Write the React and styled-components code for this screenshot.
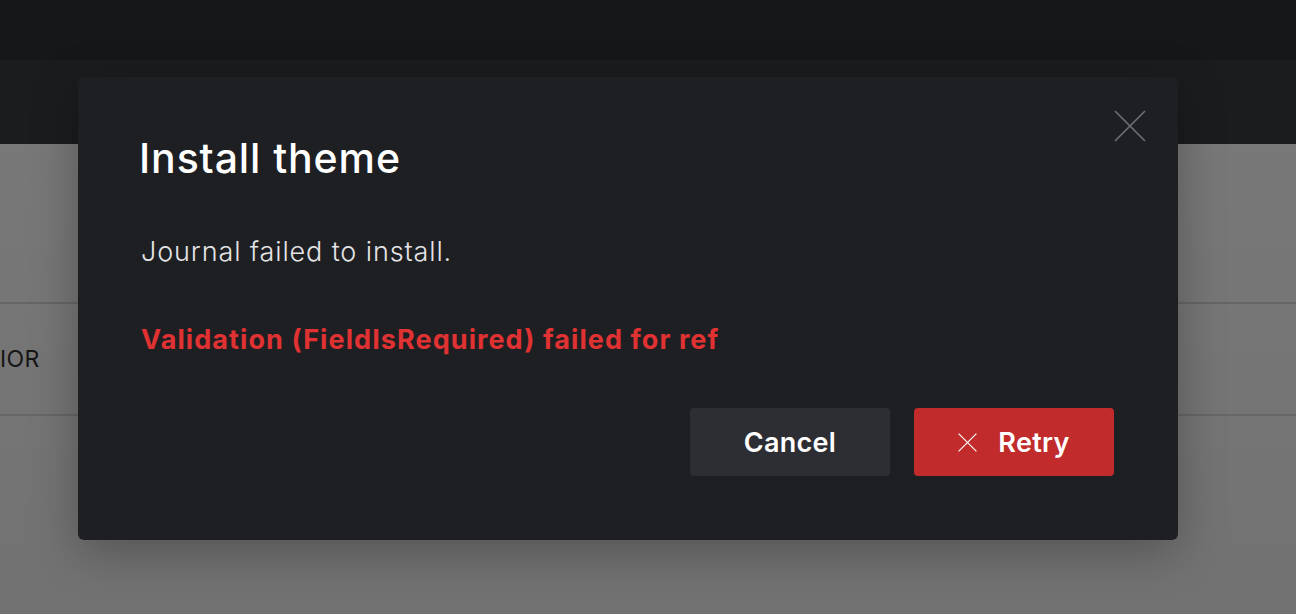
import React from "react";
import styled, { createGlobalStyle } from "styled-components";

const Global = createGlobalStyle`
  html, body { margin: 0; padding: 0; height: 100%; }
  body { font-family: Inter, "Noto Sans", sans-serif; background: #777; overflow: hidden; }
  #root { height: 100%; }
  * { box-sizing: border-box; }
`;

const Page = styled.div`
  position: relative;
  width: 1296px;
  height: 614px;
  display: flex;
  flex-direction: column;
`;

const TopBar = styled.div`
  height: 60px;
  background: #161719;
  flex-shrink: 0;
`;

const SubBar = styled.div`
  height: 84px;
  background: #1b1c1e;
  flex-shrink: 0;
`;

const Content = styled.div`
  flex: 1;
  background: linear-gradient(180deg, #787878 0%, #727272 100%);
  display: flex;
  flex-direction: column;
`;

const Section = styled.div`
  height: ${(p) => p.$h}px;
  border-bottom: ${(p) => (p.$line ? "2px solid #666667" : "none")};
  display: flex;
  align-items: center;
  font-size: 23px;
  color: #161616;
  letter-spacing: 0.4px;
`;

const Backdrop = styled.div`
  position: absolute;
  inset: 0;
`;

const Dialog = styled.div`
  position: absolute;
  left: 78px;
  top: 77px;
  width: 1100px;
  height: 463px;
  background: #1e1f23;
  border-radius: 6px;
  box-shadow: 0 12px 48px rgba(0, 0, 0, 0.28);
  padding: 55px 64px 64px 61px;
  display: flex;
  flex-direction: column;
`;

const CloseButton = styled.button`
  position: absolute;
  top: 33px;
  right: 32px;
  width: 32px;
  height: 32px;
  padding: 0;
  border: none;
  background: none;
  cursor: pointer;
  display: flex;
`;

const Title = styled.h2`
  margin: 0;
  font-size: 41px;
  font-weight: 500;
  line-height: 52px;
  color: #ffffff;
  letter-spacing: 0.9px;
`;

const Message = styled.p`
  margin: 50px 0 0 2px;
  font-size: 27px;
  font-weight: 300;
  line-height: 36px;
  color: #e4e4e6;
  letter-spacing: 0.87px;
`;

const ErrorText = styled.p`
  margin: 52px 0 0 2px;
  font-size: 27px;
  font-weight: 700;
  line-height: 36px;
  color: #e03232;
  letter-spacing: 1.08px;
`;

const Actions = styled.div`
  margin-top: auto;
  display: flex;
  justify-content: flex-end;
  gap: 24px;
`;

const Button = styled.button`
  width: 200px;
  height: 68px;
  border: none;
  border-radius: 4px;
  background: ${(p) => (p.$danger ? "#c22b2b" : "#2d2e33")};
  color: #ffffff;
  font-family: Inter, "Noto Sans", sans-serif;
  font-size: 27px;
  font-weight: 600;
  letter-spacing: 0.3px;
  display: flex;
  align-items: center;
  justify-content: center;
  gap: 21px;
  cursor: pointer;
`;

const XIcon = ({ size, color, width }) => (
  <svg width={size} height={size} viewBox="0 0 32 32" fill="none">
    <path d="M1 1L31 31M31 1L1 31" stroke={color} strokeWidth={width} />
  </svg>
);

export default function App() {
  return (
    <>
      <Global />
      <Page>
        <TopBar />
        <SubBar />
        <Content>
          <Section $h={160} $line />
          <Section $h={112} $line>IOR</Section>
        </Content>
        <Backdrop>
          <Dialog role="dialog">
            <CloseButton aria-label="Close">
              <XIcon size={32} color="#6f7073" width={1.6} />
            </CloseButton>
            <Title>Install theme</Title>
            <Message>Journal failed to install.</Message>
            <ErrorText>Validation (FieldIsRequired) failed for ref</ErrorText>
            <Actions>
              <Button>Cancel</Button>
              <Button $danger>
                <XIcon size={19} color="#ffffff" width={2} />
                Retry
              </Button>
            </Actions>
          </Dialog>
        </Backdrop>
      </Page>
    </>
  );
}
